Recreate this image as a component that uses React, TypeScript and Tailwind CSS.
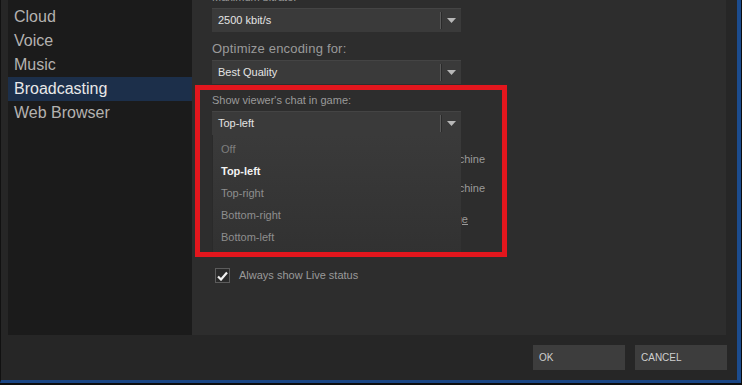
import React from 'react';

const sidebar = ['Cloud', 'Voice', 'Music', 'Broadcasting', 'Web Browser'];
const chatPositions = ['Off', 'Top-left', 'Top-right', 'Bottom-right', 'Bottom-left', 'Lower-center'];

const Arrow = () => (
  <div className="flex items-center h-full">
    <div className="w-[2px] h-[17px] bg-[#5a5a5a] border-r border-[#2a2a2a]" />
    <div className="w-[18px] flex justify-center">
      <svg width="9" height="5" viewBox="0 0 9 5">
        <path d="M0 0H9L4.5 5Z" fill="#b8b8b8" />
      </svg>
    </div>
  </div>
);

const Select = ({ value }: { value: string }) => (
  <div className="w-[249px] h-[24px] bg-[#3a3a3a] border-t border-[#444] flex items-center justify-between pl-[6px] pr-[1px]">
    <span className="text-[11px] text-[#e4e4e4]">{value}</span>
    <Arrow />
  </div>
);

const Label = ({ children, className = '' }: { children: React.ReactNode; className?: string }) => (
  <div className={`h-[14px] leading-[14px] text-[#9a9a9a] ${className}`}>{children}</div>
);

export default function App() {
  return (
    <div className="w-[742px] h-[385px] bg-[#0e0e0e] overflow-hidden" style={{ fontFamily: '"Liberation Sans", Arial, sans-serif' }}>
      <div className="w-[741px] h-[383px] bg-[#262626] border-l border-l-[#111] border-r-[4px] border-b-[3px] border-r-[#1c4c8e] border-b-[#1a4584] flex flex-col">
        <div className="flex h-[335px] pl-[7px]">
          {/* Sidebar */}
          <div className="w-[184px] bg-[#1b1b1b] pt-[5px]">
            {sidebar.map(item => (
              <div
                key={item}
                className={`h-[24px] leading-[24px] pl-[6px] text-[16px] ${item === 'Broadcasting' ? 'bg-[#1c2f4a] text-[#e8e8e8]' : 'text-[#b4b2b0]'}`}
              >
                {item}
              </div>
            ))}
          </div>

          {/* Settings panel */}
          <div className="w-[534px] bg-[#2d2d2d] pl-[20px] flex flex-col overflow-hidden">
            <Label className="mt-[-10px] text-[11px]">Maximum bitrate:</Label>
            <div className="mt-[4px]"><Select value="2500 kbit/s" /></div>
            <Label className="mt-[10px] text-[13px] tracking-[0.2px]">Optimize encoding for:</Label>
            <div className="mt-[4px]"><Select value="Best Quality" /></div>
            <Label className="mt-[9px] text-[11px]">Show viewer's chat in game:</Label>
            <div className="mt-[4px] relative z-10">
              <Select value="Top-left" />
              <div className="absolute top-full left-0 w-[249px] h-[122px] overflow-hidden bg-gradient-to-b from-[#3a3a3a] to-[#313131] border-l border-[#2a2a2a] pt-[3px]">
                {chatPositions.map(p => (
                  <div
                    key={p}
                    className={`h-[22px] leading-[22px] pl-[8px] text-[11px] ${p === 'Top-left' ? 'font-bold text-[#f2f2f2]' : p === 'Off' ? 'text-[#7e7e7e]' : 'text-[#8e8e8e]'}`}
                  >
                    {p}
                  </div>
                ))}
              </div>
            </div>

            {/* rows hidden behind the open menu */}
            <div className="mt-[17px] w-[273px] h-[14px] leading-[14px] text-right text-[11px] text-[#9a9a9a]">Use hardware encoding on this machine</div>
            <div className="mt-[15px] w-[273px] h-[14px] leading-[14px] text-right text-[11px] text-[#9a9a9a]">Record audio from this machine</div>
            <div className="mt-[17px] w-[256px] h-[14px] leading-[14px] text-right text-[11px] text-[#9a9a9a] underline">Manage</div>

            <div className="mt-[42px] flex items-center h-[15px]">
              <div className="ml-[3px] w-[15px] h-[15px] border border-[#5c5c5c] bg-[#2a2a2a] flex items-center justify-center">
                <svg width="11" height="10" viewBox="0 0 11 10">
                  <path d="M1 5.5L4 8.5L10 1.5" stroke="#f0f0f0" strokeWidth="2.2" fill="none" />
                </svg>
              </div>
              <span className="ml-[9px] text-[11px] text-[#9a9a9a]">Always show Live status</span>
            </div>
          </div>
        </div>

        {/* Footer buttons */}
        <div className="flex justify-end gap-[10px] pr-[10px] pt-[10px]">
          <button className="w-[92px] h-[25px] bg-[#3d3d3d] text-left pl-[6px] text-[10px] text-[#cfcfcf]">OK</button>
          <button className="w-[92px] h-[25px] bg-[#3d3d3d] text-left pl-[6px] text-[10px] text-[#cfcfcf]">CANCEL</button>
        </div>
      </div>

      {/* red annotation box */}
      <div className="absolute left-[195px] top-[85px] w-[312px] h-[172px] border-[5px] border-[#e3161d] z-20" />
    </div>
  );
}
